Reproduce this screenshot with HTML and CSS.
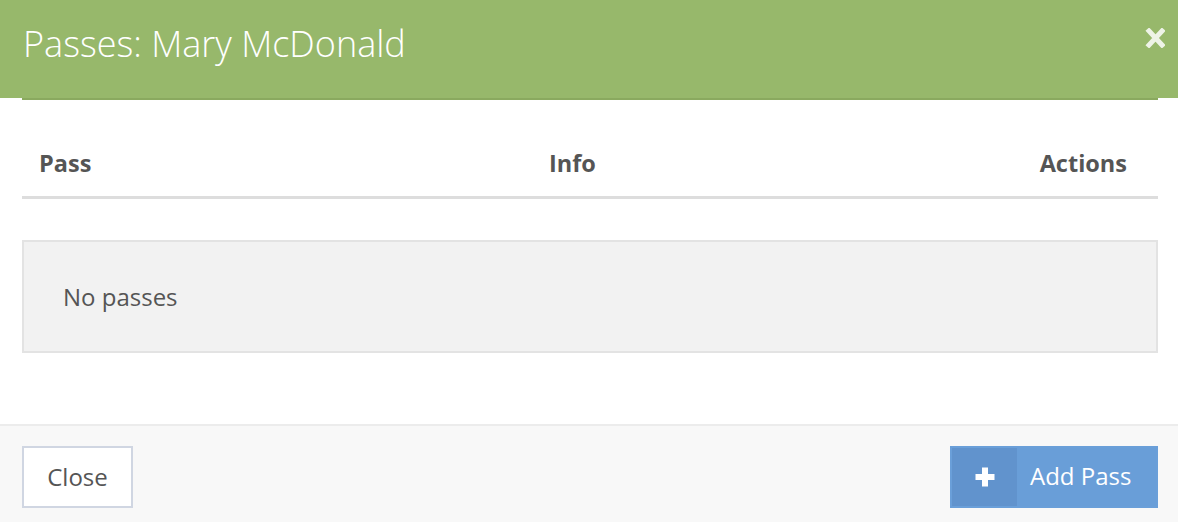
FILE: index.html
```html
<!DOCTYPE html>
<html>
<head>
<meta charset="utf-8">
<link rel="stylesheet" href="styles.css">
</head>
<body>
<div class="modal">
  <div class="modal-header">
    <h1 class="title">Passes: Mary McDonald</h1>
    <button class="close-x" aria-label="Close">
      <svg width="20" height="20" viewBox="0 0 20 20"><path d="M4 3 L17 17 M17 3 L4 17" stroke="#eef3e7" stroke-width="5" stroke-linecap="square" fill="none"/></svg>
    </button>
  </div>
  <div class="modal-body">
    <div class="table">
      <div class="thead">
        <div class="th th-pass">Pass</div>
        <div class="th th-info">Info</div>
        <div class="th th-actions">Actions</div>
      </div>
      <div class="empty">No passes</div>
    </div>
  </div>
  <div class="modal-footer">
    <button class="btn btn-close">Close</button>
    <button class="btn btn-add">
      <span class="btn-icon">
        <svg width="20" height="20" viewBox="0 0 20 20"><path d="M10 0.5 V19.5 M0.5 10 H19.5" stroke="#ffffff" stroke-width="6" fill="none"/></svg>
      </span>
      <span class="btn-label">Add Pass</span>
    </button>
  </div>
</div>
</body>
</html>
```
FILE: styles.css
```css
html, body {
  margin: 0;
  padding: 0;
  background: #ffffff;
}
body {
  font-family: "Open Sans", "Liberation Sans", sans-serif;
  color: #555555;
}
.modal {
  width: 1178px;
  height: 522px;
  display: flex;
  flex-direction: column;
  overflow: hidden;
}
.modal-header {
  height: 98px;
  box-sizing: border-box;
  background: #97b86b;
  padding: 20px 13px 0 23px;
  display: flex;
  justify-content: space-between;
  align-items: flex-start;
}
.title {
  margin: 0;
  font-weight: 300;
  font-size: 36px;
  line-height: 48px;
  color: #ffffff;
}
.close-x {
  border: 0;
  background: none;
  padding: 0;
  margin-top: 8px;
  width: 20px;
  height: 20px;
  cursor: pointer;
}
.close-x svg { display: block; }
.modal-body {
  padding: 0 20px 0 22px;
  height: 326px;
  box-sizing: border-box;
}
.table {
  border-top: 2px solid #8aa95f;
}
.thead {
  display: grid;
  grid-template-columns: 527px 1fr auto;
  padding: 47px 0 17px;
  border-bottom: 3px solid #dddddd;
}
.th {
  font-weight: 700;
  font-size: 23.5px;
  line-height: 32px;
  color: #555555;
}
.th-pass { padding-left: 17px; }
.th-actions { padding-right: 31px; }
.empty {
  margin-top: 41px;
  border: 2px solid #e3e3e3;
  background: #f2f2f2;
  padding: 39px 39px 38px;
  font-size: 24px;
  line-height: 32px;
  color: #555555;
}
.modal-footer {
  flex: 1;
  border-top: 2px solid #ececec;
  background: #f8f8f8;
  padding: 20px 20px 0 22px;
  display: flex;
  justify-content: space-between;
  align-items: flex-start;
}
.btn {
  font-family: "Open Sans", "Liberation Sans", sans-serif;
  font-size: 24px;
  height: 62px;
  box-sizing: border-box;
  cursor: pointer;
}
.btn-close {
  width: 111px;
  border: 2px solid #d0d6e2;
  background: #ffffff;
  color: #555555;
  padding: 0 0 2px;
}
.btn-add {
  width: 208px;
  border: 2px solid #6a9fd9;
  background: #699ed8;
  color: #ffffff;
  padding: 0;
  display: flex;
  align-items: stretch;
}
.btn-icon {
  width: 65px;
  background: #6193cd;
  display: flex;
  align-items: center;
  justify-content: center;
}
.btn-icon svg { display: block; }
.btn-label {
  flex: 1;
  display: flex;
  align-items: center;
  padding: 0 0 3px 13px;
  font-size: 24px;
}
```
